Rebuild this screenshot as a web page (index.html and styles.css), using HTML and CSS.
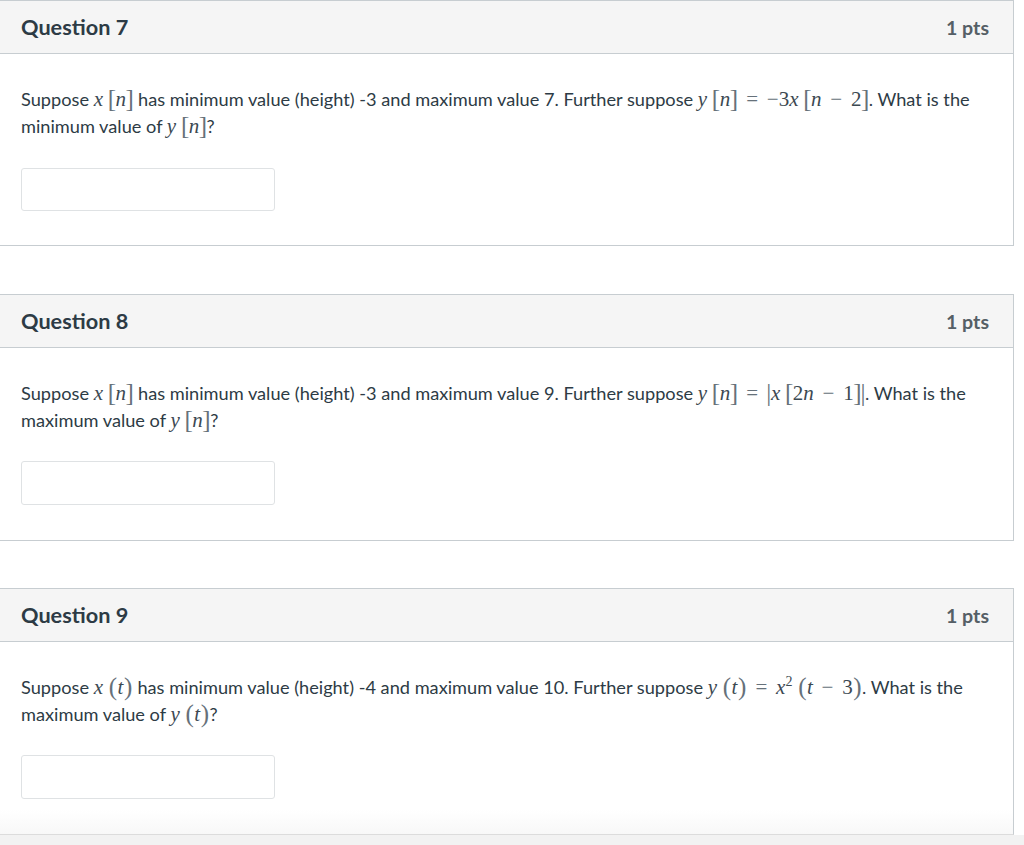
FILE: index.html
```html
<!DOCTYPE html>
<html lang="en">
  <head>
    <meta charset="UTF-8" />
    <title>Quiz</title>
    <link rel="stylesheet" href="styles.css">
  </head>
  <body>
    <div class="question">
      <div class="question-header">
        <h2>Question 7</h2>
        <span class="points">1 pts</span>
      </div>
      <div class="question-body">
        <p class="line">Suppose <span class="math"><i>x</i> <b>[</b><i>n</i><b>]</b></span> has minimum value (height) -3 and maximum value 7. Further suppose <span class="math"><i>y</i> <b>[</b><i>n</i><b>]</b> <span class="op">=</span> <span class="neg">&minus;</span>3<i>x</i> <b>[</b><i>n</i> <span class="op">&minus;</span> 2<b>]</b></span>. What is the</p>
        <p class="line">minimum value of <span class="math"><i>y</i> <b>[</b><i>n</i><b>]</b></span>?</p>
        <input type="text" class="answer" />
      </div>
    </div>

    <div class="question">
      <div class="question-header">
        <h2>Question 8</h2>
        <span class="points">1 pts</span>
      </div>
      <div class="question-body">
        <p class="line">Suppose <span class="math"><i>x</i> <b>[</b><i>n</i><b>]</b></span> has minimum value (height) -3 and maximum value 9. Further suppose <span class="math"><i>y</i> <b>[</b><i>n</i><b>]</b> <span class="op">=</span> <b>|</b><i>x</i> <b>[</b>2<i>n</i> <span class="op">&minus;</span> 1<b>]</b><b>|</b></span>. What is the</p>
        <p class="line">maximum value of <span class="math"><i>y</i> <b>[</b><i>n</i><b>]</b></span>?</p>
        <input type="text" class="answer" />
      </div>
    </div>

    <div class="question last">
      <div class="question-header">
        <h2>Question 9</h2>
        <span class="points">1 pts</span>
      </div>
      <div class="question-body">
        <p class="line">Suppose <span class="math"><i>x</i> <b>(</b><i>t</i><b>)</b></span> has minimum value (height) -4 and maximum value 10. Further suppose <span class="math"><i>y</i> <b>(</b><i>t</i><b>)</b> <span class="op">=</span> <i>x</i><sup>2</sup> <b>(</b><i>t</i> <span class="op">&minus;</span> 3<b>)</b></span>. What is the</p>
        <p class="line">maximum value of <span class="math"><i>y</i> <b>(</b><i>t</i><b>)</b></span>?</p>
        <input type="text" class="answer" />
      </div>
    </div>

    <div class="page-bottom"></div>
  </body>
</html>
```

FILE: styles.css
```css
* {
  margin: 0;
  padding: 0;
  box-sizing: border-box;
}
html, body {
  font-family: "Lato", sans-serif;
  background: #fff;
  color: #2d3b45;
}
body {
  height: 845px;
  overflow: hidden;
}
.question {
  width: 1014px;
  height: 246px;
  margin-bottom: 48px;
  border: 1px solid #c7cdd1;
  border-left: none;
}
.question + .question {
  height: 247px;
  margin-bottom: 47px;
}
.question.last {
  margin-bottom: 0;
  background: linear-gradient(#fff 90%, #f8f8f8);
  border-bottom-color: #dcdcdc;
}
.question-header {
  display: flex;
  align-items: center;
  justify-content: space-between;
  height: 53px;
  padding: 0 24px 0 21px;
  background: #f5f5f5;
  border-bottom: 1px solid #c7cdd1;
}
.question-header h2 {
  font-size: 21.7px;
  font-weight: 700;
  color: #2d3b45;
}
.points {
  font-size: 19.6px;
  font-weight: 700;
  color: #555f66;
}
.question-body {
  padding: 32px 21px 0;
}
.line {
  font-size: 18.2px;
  line-height: 27px;
  height: 27px;
  white-space: nowrap;
}
.math {
  font-family: "Liberation Serif", serif;
  font-size: 21px;
  line-height: 0;
  color: #3c4952;
}
.math i {
  font-style: italic;
}
.math b {
  font-size: 25px;
  font-weight: 400;
  line-height: 0;
  margin: 0 -0.5px;
  vertical-align: -1px;
  color: #66717a;
}
.last .math b {
  margin: 0 0.5px;
}
.math .op {
  margin: 0 3.5px;
  color: #66717a;
}
.math .neg {
  color: #66717a;
}
.math sup {
  font-size: 14px;
  line-height: 0;
}
.answer {
  display: block;
  width: 254px;
  height: 43px;
  margin-top: 28px;
  background: #fff;
  border: 1px solid #dfe2e4;
  border-radius: 3px;
}
.question + .question .answer {
  height: 44px;
  margin-top: 27px;
}
.page-bottom {
  height: 11px;
  background: #f2f2f2;
}
```
